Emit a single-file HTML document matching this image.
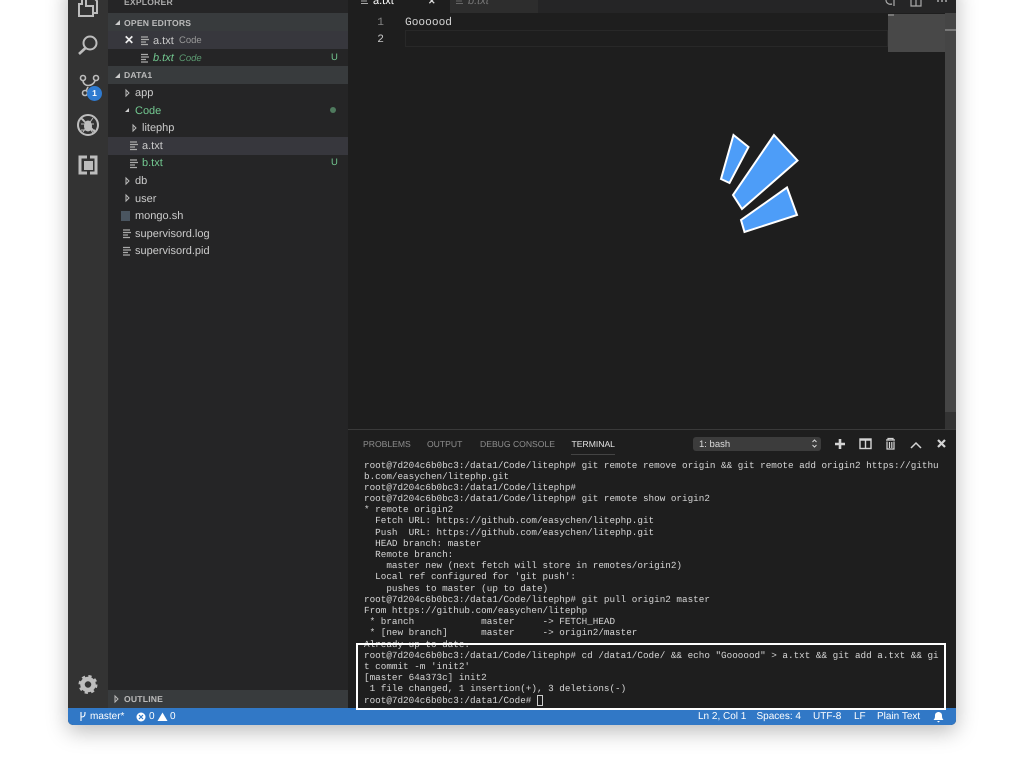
<!DOCTYPE html>
<html><head><meta charset="utf-8"><style>
html,body{margin:0;padding:0;width:1024px;height:768px;overflow:hidden;background:#fff;text-rendering:geometricPrecision}
*{box-sizing:border-box}
#w{position:absolute;left:68px;top:-20px;width:888px;height:745px;background:#1e1e1e;border-radius:5px;box-shadow:0 6px 22px rgba(0,0,0,.28)}
.a{position:absolute}
.t{position:absolute;font-family:"Liberation Sans",sans-serif;font-size:11px;line-height:14px;white-space:pre;color:#ccc}
.h{font-weight:bold;font-size:8.6px;letter-spacing:.2px;color:#bbb}
.g{color:#73c991}
.m{position:absolute;left:364px;font-family:"Liberation Mono",monospace;font-size:9.3px;line-height:11px;color:#d6d6d6;white-space:pre}
.tab{font-size:8.6px;color:#8f8f8f}
.s{color:#fff;font-size:10px}
svg{position:absolute;overflow:visible}
</style></head><body>
<div id="w"></div>
<div class="a" style="left:68px;top:0;width:40px;height:708px;background:#333"></div>
<div class="a" style="left:108px;top:0;width:240px;height:708px;background:#252526"></div>
<div class="a" style="left:108px;top:13px;width:240px;height:18px;background:#383b3d"></div>
<div class="a" style="left:108px;top:31px;width:240px;height:18px;background:#37373d"></div>
<div class="a" style="left:108px;top:66px;width:240px;height:18px;background:#383b3d"></div>
<div class="a" style="left:108px;top:137px;width:240px;height:17.5px;background:#37373d"></div>
<div class="a" style="left:108px;top:690px;width:240px;height:18px;background:#383b3d"></div>
<div class="a" style="left:348px;top:0;width:608px;height:13px;background:#252526"></div>
<div class="a" style="left:348px;top:0;width:102px;height:13px;background:#1e1e1e"></div>
<div class="a" style="left:450px;top:0;width:88px;height:13px;background:#2d2d2d"></div>
<div class="a" style="left:405px;top:30px;width:483px;height:17px;border:1px solid #282828"></div>
<div class="a" style="left:945px;top:13px;width:11px;height:416px;background:#333"></div>
<div class="a" style="left:888px;top:14px;width:57px;height:38px;background:#484848"></div>
<div class="a" style="left:945px;top:13px;width:11px;height:399px;background:#454545"></div>
<div class="a" style="left:945px;top:29px;width:11px;height:2px;background:#777"></div>
<div class="a" style="left:888px;top:14px;width:6px;height:2px;background:#777"></div>
<div class="a" style="left:348px;top:429px;width:608px;height:1px;background:#3a3a3a"></div>
<div class="a" style="left:68px;top:708px;width:888px;height:17px;background:#3178c6;border-radius:0 0 5px 5px"></div>

<!-- activity icons -->
<svg style="left:68px;top:0" width="40" height="180" fill="none" stroke="#bdbdbd">
<path d="M14 -4H24L29 1V13H25M14 -4V4H11V16H25V6H18V-4" stroke-width="2"/>
<circle cx="22" cy="43" r="6.5" stroke-width="2"/><path d="M17.5 48L11 54" stroke-width="2.6"/>
<circle cx="15" cy="78" r="2.5" stroke-width="1.6"/><circle cx="28" cy="78" r="2.5" stroke-width="1.6"/><circle cx="17" cy="93" r="2.5" stroke-width="1.6"/>
<path d="M15 81C16 87 24 87 27 81M20 87L18 91" stroke-width="1.6"/>
<circle cx="20" cy="125" r="10" stroke-width="2"/><path d="M13 118L27 132" stroke-width="1.8"/><ellipse cx="20" cy="126" rx="4" ry="5.5" fill="#bdbdbd" stroke="none"/><path d="M13 124L26 124M13 130H27M15 119L25 133M25 118L15 132" stroke-width="1"/>
<path d="M19 157H12V173H19M22 157H28V173H22M28 163V167" stroke-width="3"/><rect x="16" y="161" width="9" height="9" fill="#bdbdbd" stroke="none"/>
</svg>
<div class="a" style="left:87px;top:86px;width:15px;height:15px;border-radius:50%;background:#2f7bd0;color:#fff;font:bold 8.5px/15px 'Liberation Sans',sans-serif;text-align:center">1</div>
<svg style="left:68px;top:665px" width="40" height="40"><circle cx="20" cy="19.5" r="5.5" fill="none" stroke="#bdbdbd" stroke-width="4.5"/><circle cx="20" cy="19.5" r="8" fill="none" stroke="#bdbdbd" stroke-width="3" stroke-dasharray="3.1 3.2"/></svg>

<!-- sidebar text -->
<div class="t h" style="left:124px;top:-5px;color:#aaa">EXPLORER</div>
<svg style="left:114px;top:19px" width="8" height="8"><path d="M6 1V6H1Z" fill="#ccc"/></svg>
<div class="t h" style="left:124px;top:15.5px">OPEN EDITORS</div>
<div class="t" style="left:124px;top:33px;font-size:12px;font-weight:bold;color:#eee">✕</div>
<div class="t" style="left:153px;top:33.5px">a.txt</div><div class="t" style="left:179px;top:34px;font-size:9.5px;color:#999">Code</div>
<div class="t g" style="left:153px;top:51px;font-style:italic">b.txt</div><div class="t" style="left:179px;top:51.5px;font-size:9.5px;font-style:italic;color:#5d9c72">Code</div>
<div class="t g" style="left:331px;top:50.5px;font-size:9.5px">U</div>
<svg style="left:114px;top:72px" width="8" height="8"><path d="M6 1V6H1Z" fill="#ccc"/></svg>
<div class="t h" style="left:124px;top:68px">DATA1</div>
<div class="t" style="left:135px;top:86px">app</div>
<div class="t g" style="left:135px;top:103.5px">Code</div>
<div class="a" style="left:330px;top:107px;width:6px;height:6px;border-radius:50%;background:#4f7a5e"></div>
<div class="t" style="left:142px;top:121px">litephp</div>
<div class="t" style="left:142px;top:138.5px">a.txt</div>
<div class="t g" style="left:142px;top:156px">b.txt</div>
<div class="t g" style="left:331px;top:155.5px;font-size:9.5px">U</div>
<div class="t" style="left:135px;top:174px">db</div>
<div class="t" style="left:135px;top:191.5px">user</div>
<div class="t" style="left:135px;top:209px">mongo.sh</div>
<div class="t" style="left:135px;top:226.5px">supervisord.log</div>
<div class="t" style="left:135px;top:244px">supervisord.pid</div>
<div class="t h" style="left:124px;top:692px">OUTLINE</div>
<svg style="left:108px;top:0" width="240" height="708">
<g fill="none" stroke="#bbb" stroke-width="1"><path d="M18 90V96L21 93ZM25 125V131L28 128ZM18 178V184L21 181ZM18 195V201L21 198Z"/><path d="M7 696V702L10 699Z"/></g>
<path d="M21 108V112H17Z" fill="#ccc"/>
<g stroke="#aaa" stroke-width="1.2"><path d="M33 37H40M33 39.5H41M33 42H38M33 44.5H40"/><path d="M33 54.5H40M33 57H41M33 59.5H38M33 62H40"/><path d="M22 142H29M22 144.5H30M22 147H27M22 149.5H29"/><path d="M22 160H29M22 162.5H30M22 165H27M22 167.5H29"/><path d="M15 230H22M15 232.5H23M15 235H20M15 237.5H22"/><path d="M15 247.5H22M15 250H23M15 252.5H20M15 255H22"/></g>
<rect x="13" y="211" width="9" height="10" fill="#4a5560"/>
</svg>

<!-- tabs -->
<div class="t" style="left:373px;top:-6px;color:#fff">a.txt</div>
<div class="t" style="left:468px;top:-6px;color:#777;font-style:italic">b.txt</div>
<div class="t" style="left:428px;top:-6px;font-size:9px;color:#ddd;font-weight:bold">✕</div>
<svg style="left:348px;top:0" width="608" height="13" fill="none" stroke="#aaa"><path d="M13 1H19M13 3.5H20"/><path d="M108 1H114M108 3.5H115" stroke="#666"/><path d="M538 0C538 3 541 5 544 4M546 0V6" stroke-width="1.2"/><path d="M563 0V6H573V0M568 0V6" stroke-width="1.2"/><path d="M589 1H591M593 1H595M597 1H599" stroke-width="1.4"/></svg>

<!-- editor -->
<div class="t" style="left:368px;top:15.5px;width:16px;text-align:right;font:11.2px/14px 'Liberation Mono',monospace;color:#858585">1</div>
<div class="t" style="left:368px;top:33px;width:16px;text-align:right;font:11.2px/14px 'Liberation Mono',monospace;color:#c6c6c6">2</div>
<div class="t" style="left:405px;top:15.5px;font:11.2px/14px 'Liberation Mono',monospace;color:#d4d4d4">Goooood</div>

<!-- logo -->
<svg style="left:700px;top:120px" width="120" height="125"><g fill="#4d9df8" stroke="#fff" stroke-width="2" stroke-linejoin="miter"><path d="M33.5 15L48.5 27L29.5 63L21 59Z"/><path d="M74 15L97.5 40.5L42 89L33 75Z"/><path d="M87 67.5L97 95L44.5 112L41 100Z"/></g></svg>

<!-- panel -->
<div class="t tab" style="left:363px;top:437px">PROBLEMS</div>
<div class="t tab" style="left:427px;top:437px">OUTPUT</div>
<div class="t tab" style="left:480px;top:437px">DEBUG CONSOLE</div>
<div class="t tab" style="left:571.5px;top:437px;color:#e7e7e7">TERMINAL</div>
<div class="a" style="left:571px;top:454px;width:44px;height:1px;background:#444"></div>
<div class="a" style="left:693px;top:437px;width:128px;height:14px;border-radius:3px;background:#3c3c3c"></div>
<div class="t" style="left:699px;top:437.5px;font-size:9.5px;color:#ddd">1: bash</div>
<svg style="left:680px;top:425px" width="280" height="50" fill="none" stroke="#d4d4d4">
<path d="M132.5 17L134.5 15L136.5 17M132.5 20L134.5 22L136.5 20" stroke-width="1"/>
<path d="M155 19H165M160 14V24" stroke-width="2.6"/>
<rect x="180" y="14" width="11" height="9.5" stroke-width="1.4"/><path d="M185.5 14V23.5M180 15H191" stroke-width="1.4"/>
<path d="M206 15H215M208 15V13.5H213V15M207 16.5V24H214V16.5M209.5 17V23M211.8 17V23" stroke-width="1.2"/>
<path d="M231 23L236 18L241 23" stroke-width="1.5"/>
<path d="M258 15L265 22M265 15L258 22" stroke-width="2.2"/>
</svg>

<!-- terminal -->
<div class="m" style="top:459.5px">root@7d204c6b0bc3:/data1/Code/litephp# git remote remove origin &amp;&amp; git remote add origin2 https://githu</div>
<div class="m" style="top:470.7px">b.com/easychen/litephp.git</div>
<div class="m" style="top:481.9px">root@7d204c6b0bc3:/data1/Code/litephp#</div>
<div class="m" style="top:493.1px">root@7d204c6b0bc3:/data1/Code/litephp# git remote show origin2</div>
<div class="m" style="top:504.3px">* remote origin2</div>
<div class="m" style="top:515.4px">  Fetch URL: https://github.com/easychen/litephp.git</div>
<div class="m" style="top:526.6px">  Push  URL: https://github.com/easychen/litephp.git</div>
<div class="m" style="top:537.8px">  HEAD branch: master</div>
<div class="m" style="top:549px">  Remote branch:</div>
<div class="m" style="top:560.2px">    master new (next fetch will store in remotes/origin2)</div>
<div class="m" style="top:571.4px">  Local ref configured for 'git push':</div>
<div class="m" style="top:582.6px">    pushes to master (up to date)</div>
<div class="m" style="top:593.8px">root@7d204c6b0bc3:/data1/Code/litephp# git pull origin2 master</div>
<div class="m" style="top:605px">From https://github.com/easychen/litephp</div>
<div class="m" style="top:616.2px"> * branch            master     -&gt; FETCH_HEAD</div>
<div class="m" style="top:627.4px"> * [new branch]      master     -&gt; origin2/master</div>
<div class="m" style="top:638.6px">Already up to date.</div>
<div class="m" style="top:649.8px">root@7d204c6b0bc3:/data1/Code/litephp# cd /data1/Code/ &amp;&amp; echo "Goooood" &gt; a.txt &amp;&amp; git add a.txt &amp;&amp; gi</div>
<div class="m" style="top:661px">t commit -m 'init2'</div>
<div class="m" style="top:672.2px">[master 64a373c] init2</div>
<div class="m" style="top:683.4px"> 1 file changed, 1 insertion(+), 3 deletions(-)</div>
<div class="m" style="top:694.6px">root@7d204c6b0bc3:/data1/Code#</div>
<div class="a" style="left:537px;top:695px;width:5.5px;height:11px;border:1px solid #ccc"></div>
<div class="a" style="left:355.5px;top:643px;width:590px;height:67px;border:2px solid #fff"></div>

<!-- status -->
<svg style="left:78px;top:710px" width="110" height="14" fill="none" stroke="#fff"><path d="M3 2V11M3 7C7 7 7 5 7 2" stroke-width="1.1"/><circle cx="63" cy="7" r="4.5" fill="#fff" stroke="none"/><path d="M61 5L65 9M65 5L61 9" stroke="#3178c6" stroke-width="1.2"/><path d="M79.5 11L84.5 2.5L89.5 11Z" fill="#fff" stroke="none"/></svg>
<div class="t s" style="left:90px;top:709.5px">master*</div>
<div class="t s" style="left:149px;top:709.5px">0</div>
<div class="t s" style="left:170px;top:709.5px">0</div>
<div class="t s" style="left:698px;top:709.5px">Ln 2, Col 1</div>
<div class="t s" style="left:756.5px;top:709.5px">Spaces: 4</div>
<div class="t s" style="left:813px;top:709.5px">UTF-8</div>
<div class="t s" style="left:854px;top:709.5px">LF</div>
<div class="t s" style="left:877px;top:709.5px">Plain Text</div>
<svg style="left:932px;top:711px" width="14" height="12"><path d="M1.5 9C3 7.5 3 6 3 4.5C3 2 5 1 6.5 1C8 1 10 2 10 4.5C10 6 10 7.5 11.5 9ZM5 10H8L6.5 11.5Z" fill="#fff"/></svg>
</body></html>
